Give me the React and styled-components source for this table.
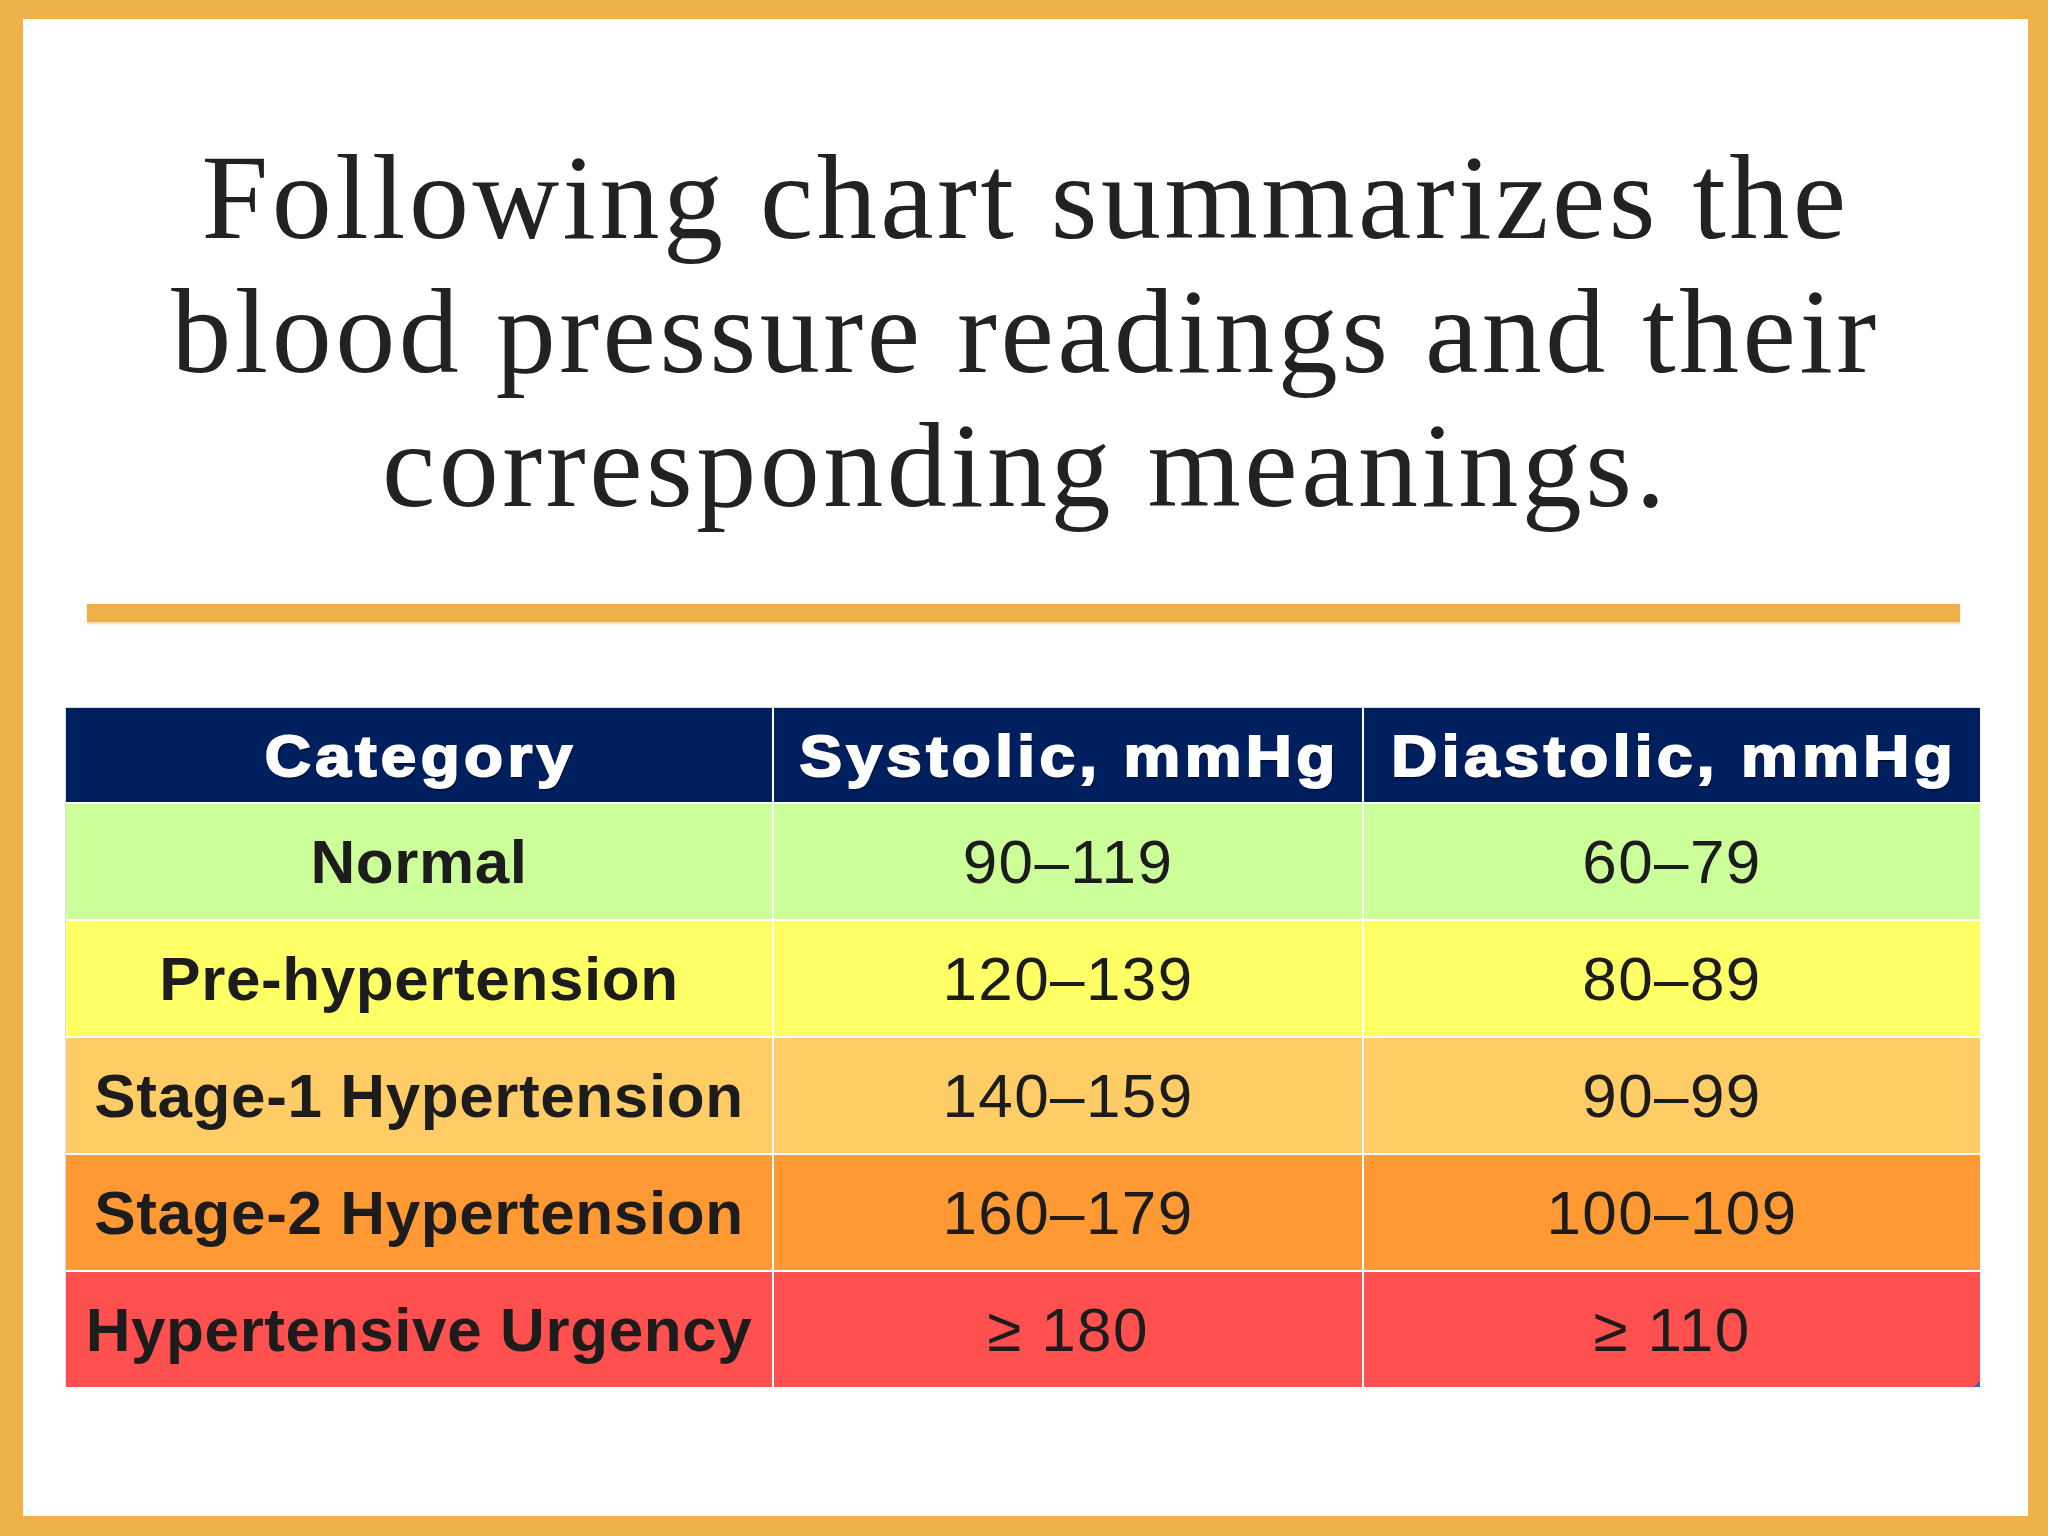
import React from "react";
import styled, { createGlobalStyle } from "styled-components";

const GlobalStyle = createGlobalStyle`
  html, body { margin: 0; padding: 0; }
  body { background: #eeb14b; }
`;

const Frame = styled.div`
  box-sizing: border-box;
  width: 2048px;
  height: 1536px;
  background: #eeb14b;
  padding: 19px 20px 20px 23px;
`;

const Sheet = styled.main`
  box-sizing: border-box;
  height: 100%;
  background: #ffffff;
  display: flex;
  flex-direction: column;
  padding-top: 112px;
`;

const Title = styled.h1`
  margin: 0;
  font-family: "Liberation Serif", "Times New Roman", serif;
  font-weight: 400;
  font-size: 120px;
  line-height: 134px;
  letter-spacing: 3.5px;
  color: #222222;
  text-align: center;
`;

const Rule = styled.div`
  margin: 71px 0 0 64px;
  width: 1873px;
  height: 18px;
  background: #edb04a;
  box-shadow: 0 2px 2px rgba(237, 176, 74, 0.45);
`;

const Table = styled.div`
  position: relative;
  margin: 86px 0 0 43px;
  width: 1914px;
  display: grid;
  grid-template-columns: 706px 588px 616px;
  grid-template-rows: 94px repeat(5, 115px);
  gap: 2px;
  background: #ffffff;
  box-shadow: -1px -1px 0 #d6dbe8;

  &::after {
    content: "";
    position: absolute;
    right: 0;
    bottom: 0;
    width: 0;
    height: 0;
    border-left: 6px solid transparent;
    border-bottom: 6px solid #3b5bc4;
  }
`;

const HeadCell = styled.div`
  background: #001f5f;
  display: flex;
  align-items: center;
  justify-content: center;
  overflow: hidden;
`;

const HeadLabel = styled.span`
  display: inline-block;
  font-family: "Liberation Sans", Arial, sans-serif;
  font-weight: 700;
  font-size: 58px;
  letter-spacing: 4px;
  margin-right: -4px;
  color: #ffffff;
  -webkit-text-stroke: 2px #ffffff;
  text-shadow: 1px 2px 2px rgba(0, 0, 0, 0.7);
  white-space: nowrap;
  transform: scaleX(1.1);
`;

const Cell = styled.div`
  background: ${(p) => p.$bg};
  display: flex;
  align-items: center;
  justify-content: center;
  font-family: "Liberation Sans", Arial, sans-serif;
  font-weight: ${(p) => (p.$bold ? 700 : 400)};
  font-size: 62px;
  letter-spacing: ${(p) => (p.$bold ? "0.6px" : "1.4px")};
  color: #1c1c1c;
  white-space: nowrap;
`;

const rows = [
  { cat: "Normal", sys: "90–119", dia: "60–79", bg: "#ccff99" },
  { cat: "Pre-hypertension", sys: "120–139", dia: "80–89", bg: "#ffff66" },
  { cat: "Stage-1 Hypertension", sys: "140–159", dia: "90–99", bg: "#ffcc66" },
  { cat: "Stage-2 Hypertension", sys: "160–179", dia: "100–109", bg: "#ff9933" },
  { cat: "Hypertensive Urgency", sys: "≥ 180", dia: "≥ 110", bg: "#ff5050" },
];

export default function App() {
  return (
    <>
      <GlobalStyle />
      <Frame>
        <Sheet>
          <Title>
            Following chart summarizes the
            <br />
            blood pressure readings and their
            <br />
            corresponding meanings.
          </Title>
          <Rule />
          <Table>
            <HeadCell>
              <HeadLabel>Category</HeadLabel>
            </HeadCell>
            <HeadCell>
              <HeadLabel>Systolic, mmHg</HeadLabel>
            </HeadCell>
            <HeadCell>
              <HeadLabel>Diastolic, mmHg</HeadLabel>
            </HeadCell>
            {rows.map((r) => (
              <React.Fragment key={r.cat}>
                <Cell $bg={r.bg} $bold>
                  {r.cat}
                </Cell>
                <Cell $bg={r.bg}>{r.sys}</Cell>
                <Cell $bg={r.bg}>{r.dia}</Cell>
              </React.Fragment>
            ))}
          </Table>
        </Sheet>
      </Frame>
    </>
  );
}
